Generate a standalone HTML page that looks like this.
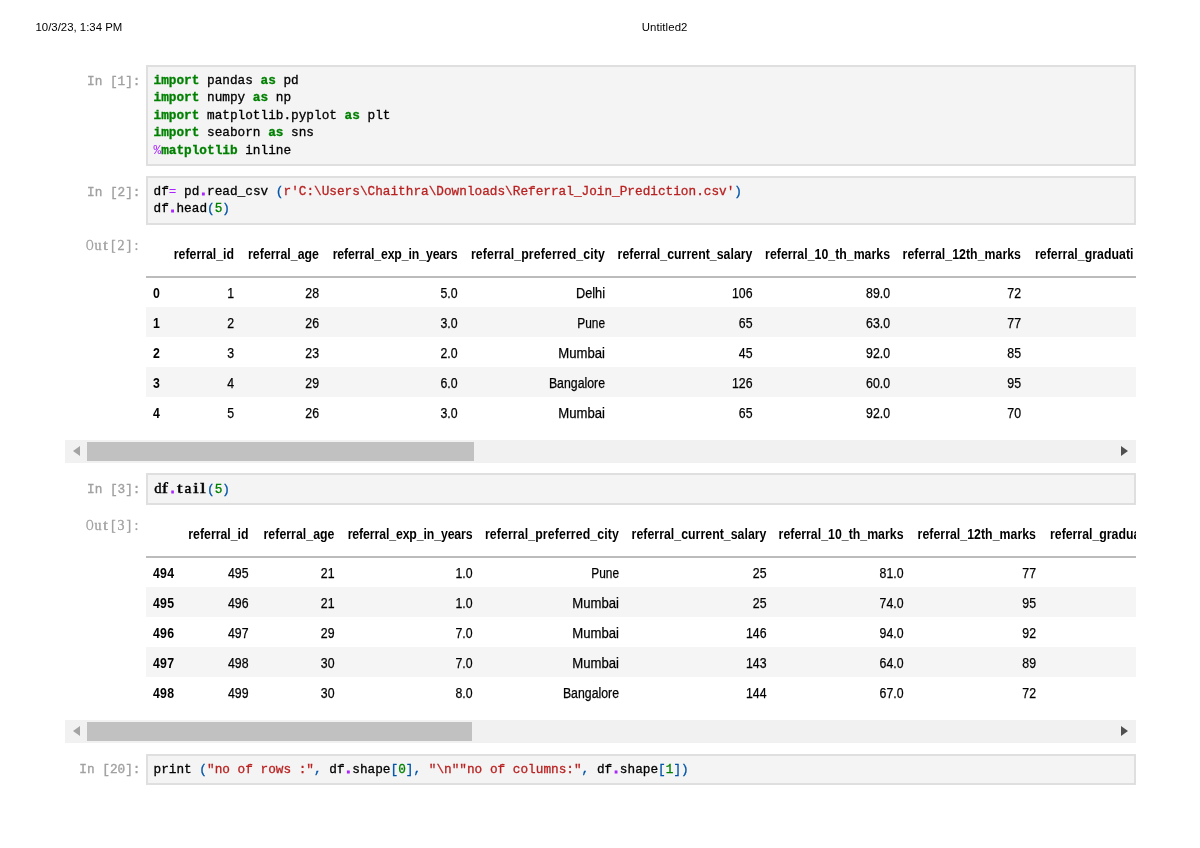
<!DOCTYPE html>
<html>
<head>
<meta charset="utf-8">
<title>Untitled2</title>
<style>
html,body{margin:0;padding:0;background:#fff;}
body{width:1200px;height:848px;position:relative;overflow:hidden;font-family:"Liberation Sans",sans-serif;color:#000;}
.hd{position:absolute;top:20px;font:11.4px/14px "Liberation Sans",sans-serif;color:#000;white-space:nowrap;}
.cell{position:absolute;left:146px;width:986px;background:#f4f4f4;border:2px solid #dfdfdf;box-sizing:content-box;}
.code{position:absolute;left:5.5px;top:4.9px;margin:0;font:12.745px/17.44px "Liberation Mono",monospace;color:#000;white-space:pre;-webkit-text-stroke:0.3px;}
.pr{position:absolute;left:40px;width:100.5px;text-align:right;font:12.745px/17.44px "Liberation Mono",monospace;color:#a0a0a0;white-space:pre;-webkit-text-stroke:0.35px;}
.ps{font-family:"Liberation Serif",serif;font-size:14px;width:100px;text-align:left;height:18px;-webkit-text-stroke:0.3px #a0a0a0;}
.ps s{position:absolute;top:0;text-decoration:none;transform-origin:left center;}
.sf s{display:inline-block;width:7.647px;text-align:center;text-decoration:none;font:normal 15.5px/17.44px "Liberation Serif",serif;vertical-align:baseline;-webkit-text-stroke:0.45px;}
.sf s.o{font-family:"Liberation Mono",monospace;font-size:12.745px;-webkit-text-stroke:1px;}
.k{color:#008000;font-weight:bold;}
.o{color:#aa22ff;font-weight:bold;}
.s{color:#ba2121;}
.n{color:#008000;}
.p{color:#0055aa;}
.d{-webkit-text-stroke:1px;}
.o.t{font-weight:normal;-webkit-text-stroke:0;}
.tbl{position:absolute;left:146px;width:990px;height:200px;overflow:hidden;font:14px/30px "Liberation Sans",sans-serif;color:#000;}
.tbl .st{position:absolute;left:0;width:990px;height:30px;background:#f5f5f5;}
.tbl .hl{position:absolute;left:0;width:990px;height:2px;background:#bcbcbc;}
.tbl .c{position:absolute;left:0;text-align:right;white-space:nowrap;}
.tbl .c b{display:block;height:45px;line-height:44px;font-weight:bold;transform:scaleX(0.8786);transform-origin:right center;}
.tbl .c i{display:block;font-style:normal;-webkit-text-stroke:0.25px #000;height:30px;position:relative;top:1.4px;transform:scaleX(0.8786);transform-origin:right center;}
.tbl .ix{position:absolute;left:6.5px;text-align:left;font-weight:bold;top:45px;}
.tbl .ix i{display:block;font-style:normal;height:30px;position:relative;top:1.4px;letter-spacing:0.3px;transform:scaleX(0.8786);transform-origin:left center;}
.sb{position:absolute;left:65px;width:1071px;height:23px;background:#f1f1f1;}
.sb .th{position:absolute;left:22.2px;top:2.2px;height:19px;background:#c1c1c1;}
.sb .al{position:absolute;left:8px;top:6.5px;width:0;height:0;border-top:5.5px solid transparent;border-bottom:5.5px solid transparent;border-right:7px solid #a3a3a3;}
.sb .ar{position:absolute;left:1056px;top:6.5px;width:0;height:0;border-top:5.5px solid transparent;border-bottom:5.5px solid transparent;border-left:7px solid #505050;}
</style>
</head>
<body><div id="w" style="position:absolute;left:0;top:0;width:1200px;height:848px;will-change:transform">
<div class="hd" style="left:35.5px">10/3/23, 1:34 PM</div>
<div class="hd" style="left:641.7px;letter-spacing:0.1px">Untitled2</div>

<!-- cell 1 -->
<div class="pr" style="top:72.9px">In [1]:</div>
<div class="cell" style="top:65px;height:97px"><pre class="code"><span class="k">import</span> pandas <span class="k">as</span> pd
<span class="k">import</span> numpy <span class="k">as</span> np
<span class="k">import</span> matplotlib.pyplot <span class="k">as</span> plt
<span class="k">import</span> seaborn <span class="k">as</span> sns
<span class="o t">%</span><span class="k">matplotlib</span> inline</pre></div>

<!-- cell 2 -->
<div class="pr" style="top:183.9px">In [2]:</div>
<div class="cell" style="top:176px;height:44.7px"><pre class="code">df<span class="o t">=</span> pd<span class="o d">.</span>read_csv <span class="p">(</span><span class="s">r'C:\Users\Chaithra\Downloads\Referral_Join_Prediction.csv'</span><span class="p">)</span>
df<span class="o d">.</span>head<span class="p">(</span><span class="n">5</span><span class="p">)</span></pre></div>

<!-- out 2 -->
<div class="pr ps" style="top:237.1px"><s style="left:45.6px;transform:scaleX(0.75)">O</s><s style="left:54.5px">u</s><s style="left:62.5px;transform:scaleX(1.25)">t</s><s style="left:71px">[</s><s style="left:77.5px">2</s><s style="left:86.6px">]</s><s style="left:94.6px">:</s></div>
<div class="tbl" style="top:232px">
<div class="hl" style="top:44px"></div>
<div class="st" style="top:75px"></div>
<div class="st" style="top:135px"></div>
<div class="ix"><i>0</i><i>1</i><i>2</i><i>3</i><i>4</i></div>
<div class="c" style="width:88px"><b>referral_id</b><i>1</i><i>2</i><i>3</i><i>4</i><i>5</i></div>
<div class="c" style="width:173px"><b style="letter-spacing:0.05px">referral_age</b><i>28</i><i>26</i><i>23</i><i>29</i><i>26</i></div>
<div class="c" style="width:311.5px"><b style="letter-spacing:-0.13px">referral_exp_in_years</b><i>5.0</i><i>3.0</i><i>2.0</i><i>6.0</i><i>3.0</i></div>
<div class="c" style="width:459px"><b style="letter-spacing:0.14px">referral_preferred_city</b><i style="transform:scaleX(0.91)">Delhi</i><i style="transform:scaleX(0.85)">Pune</i><i style="transform:scaleX(0.938)">Mumbai</i><i>Bangalore</i><i style="transform:scaleX(0.938)">Mumbai</i></div>
<div class="c" style="width:606.5px"><b style="letter-spacing:0.043px">referral_current_salary</b><i>106</i><i>65</i><i>45</i><i>126</i><i>65</i></div>
<div class="c" style="width:744px"><b style="letter-spacing:0.025px">referral_10_th_marks</b><i>89.0</i><i>63.0</i><i>92.0</i><i>60.0</i><i>92.0</i></div>
<div class="c" style="width:875px"><b style="letter-spacing:0.047px">referral_12th_marks</b><i>72</i><i>77</i><i>85</i><i>95</i><i>70</i></div>
<div class="c" style="left:889px;text-align:left"><b style="letter-spacing:0.05px;transform-origin:left center">referral_graduati</b></div>
</div>
<div class="sb" style="top:439.5px"><div class="al"></div><div class="th" style="width:386.5px"></div><div class="ar"></div></div>

<!-- cell 3 -->
<div class="pr" style="top:481px">In [3]:</div>
<div class="cell" style="top:473.1px;height:27.8px"><pre class="code" style="top:3.7px"><span class="sf"><s style="transform:scaleX(0.95)">d</s><s style="transform:scaleX(1.2)">f</s><s class="o d">.</s><s style="transform:scaleX(1.3)">t</s><s style="transform:scaleX(1)">a</s><s style="transform:scaleX(1.35)">i</s><s style="transform:scaleX(1.35)">l</s></span><span class="p">(</span><span class="n">5</span><span class="p">)</span></pre></div>

<!-- out 3 -->
<div class="pr ps" style="top:517.1px"><s style="left:45.6px;transform:scaleX(0.75)">O</s><s style="left:54.5px">u</s><s style="left:62.5px;transform:scaleX(1.25)">t</s><s style="left:71px">[</s><s style="left:77.5px">3</s><s style="left:86.6px">]</s><s style="left:94.6px">:</s></div>
<div class="tbl" style="top:512px">
<div class="hl" style="top:44px"></div>
<div class="st" style="top:75px"></div>
<div class="st" style="top:135px"></div>
<div class="ix"><i>494</i><i>495</i><i>496</i><i>497</i><i>498</i></div>
<div class="c" style="width:102.5px"><b>referral_id</b><i>495</i><i>496</i><i>497</i><i>498</i><i>499</i></div>
<div class="c" style="width:188.5px"><b style="letter-spacing:0.05px">referral_age</b><i>21</i><i>21</i><i>29</i><i>30</i><i>30</i></div>
<div class="c" style="width:326.5px"><b style="letter-spacing:-0.13px">referral_exp_in_years</b><i>1.0</i><i>1.0</i><i>7.0</i><i>7.0</i><i>8.0</i></div>
<div class="c" style="width:473px"><b style="letter-spacing:0.14px">referral_preferred_city</b><i style="transform:scaleX(0.85)">Pune</i><i style="transform:scaleX(0.938)">Mumbai</i><i style="transform:scaleX(0.938)">Mumbai</i><i style="transform:scaleX(0.938)">Mumbai</i><i>Bangalore</i></div>
<div class="c" style="width:620.5px"><b style="letter-spacing:0.043px">referral_current_salary</b><i>25</i><i>25</i><i>146</i><i>143</i><i>144</i></div>
<div class="c" style="width:757.5px"><b style="letter-spacing:0.025px">referral_10_th_marks</b><i>81.0</i><i>74.0</i><i>94.0</i><i>64.0</i><i>67.0</i></div>
<div class="c" style="width:890px"><b style="letter-spacing:0.047px">referral_12th_marks</b><i>77</i><i>95</i><i>92</i><i>89</i><i>72</i></div>
<div class="c" style="left:903.5px;text-align:left"><b style="transform-origin:left center">referral_graduation_marks</b></div>
</div>
<div class="sb" style="top:719.5px"><div class="al"></div><div class="th" style="width:384.5px"></div><div class="ar"></div></div>

<!-- cell 20 -->
<div class="pr" style="top:761.4px">In [20]:</div>
<div class="cell" style="top:753.8px;height:27.4px"><pre class="code">print <span class="p">(</span><span class="s">"no of rows :"</span><span class="p">,</span> df<span class="o d">.</span>shape<span class="p">[</span><span class="n">0</span><span class="p">],</span> <span class="s">"\n""no of columns:"</span><span class="p">,</span> df<span class="o d">.</span>shape<span class="p">[</span><span class="n">1</span><span class="p">])</span></pre></div>
</div></body>
</html>
